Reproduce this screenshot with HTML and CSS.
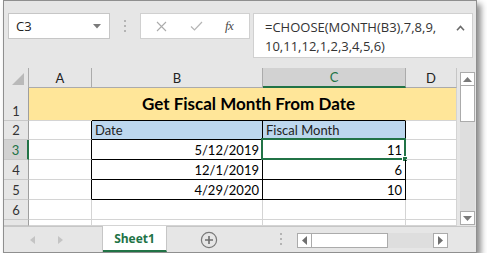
FILE: index.html
```html
<!doctype html>
<html lang="en">
<head>
	<meta charset="UTF-8">
	<title>Get Fiscal Month From Date</title>
	<link rel="stylesheet" href="styles.css">
</head>
<body>
	<div class="window">
		<!-- formula bar -->
		<div class="formula_bar">
			<div class="name_box">
				<span>C3</span>
				<svg width="8" height="5" viewBox="0 0 8 5"><path d="M0 0h8L4 4.5z" fill="#7a7a7a"/></svg>
			</div>
			<div class="grip"><i></i><i></i><i></i></div>
			<div class="fx_box">
				<svg width="11" height="11" viewBox="0 0 11 11"><path d="M1 1l9 9M10 1l-9 9" stroke="#ababab" stroke-width="1.1" fill="none"/></svg>
				<svg width="13" height="10" viewBox="0 0 13 10"><path d="M1 5.5l3.5 3.5L12 1" stroke="#b5b5b5" stroke-width="1.2" fill="none"/></svg>
				<span class="fx">fx</span>
			</div>
			<div class="formula">
				<div class="formula_text">=CHOOSE(MONTH(B3),7,8,9,<br>10,11,12,1,2,3,4,5,6)</div>
				<svg class="collapse" width="9" height="6" viewBox="0 0 9 6"><path d="M1 5.2L4.5 1.5 8 5.2" stroke="#6a6a6a" stroke-width="1.6" fill="none"/></svg>
			</div>
		</div>

		<!-- sheet -->
		<div class="sheet_area">
			<div class="grid">
				<div class="corner"><svg width="12" height="12" viewBox="0 0 12 12"><path d="M12 0v12H0z" fill="#b9b9b9"/></svg></div>
				<div class="col_head">A</div>
				<div class="col_head">B</div>
				<div class="col_head active">C</div>
				<div class="col_head last">D</div>

				<div class="row_head">1</div>
				<div class="cell fill no_right"></div>
				<div class="cell fill title">Get Fiscal Month From Date</div>
				<div class="cell fill"></div>

				<div class="row_head">2</div>
				<div class="cell edge"></div>
				<div class="cell tbl head">Date</div>
				<div class="cell tbl head">Fiscal Month</div>
				<div class="cell"></div>

				<div class="row_head active">3</div>
				<div class="cell edge"></div>
				<div class="cell tbl num">5/12/2019</div>
				<div class="cell tbl num selected">11<span class="sel"></span><span class="handle"></span></div>
				<div class="cell"></div>

				<div class="row_head">4</div>
				<div class="cell edge"></div>
				<div class="cell tbl num">12/1/2019</div>
				<div class="cell tbl num">6</div>
				<div class="cell"></div>

				<div class="row_head">5</div>
				<div class="cell edge"></div>
				<div class="cell tbl num">4/29/2020</div>
				<div class="cell tbl num">10</div>
				<div class="cell"></div>

				<div class="row_head">6</div>
				<div class="cell"></div>
				<div class="cell"></div>
				<div class="cell"></div>
				<div class="cell"></div>

				<div class="row_head"></div>
				<div class="cell"></div>
				<div class="cell"></div>
				<div class="cell"></div>
				<div class="cell"></div>
			</div>
			<div class="vscroll">
				<div class="sbtn"><svg width="9" height="5" viewBox="0 0 9 5"><path d="M0 5L4.5 0 9 5z" fill="#7a7a7a"/></svg></div>
				<div class="thumb"></div>
				<div class="track"></div>
				<div class="sbtn"><svg width="9" height="5" viewBox="0 0 9 5"><path d="M0 0h9L4.5 5z" fill="#7a7a7a"/></svg></div>
			</div>
		</div>

		<!-- sheet tabs -->
		<div class="tab_bar">
			<div class="tab_nav">
				<svg width="5" height="8" viewBox="0 0 5 8"><path d="M5 0v8L0 4z" fill="#c4c4c4"/></svg>
				<svg width="5" height="8" viewBox="0 0 5 8"><path d="M0 0v8l5-4z" fill="#c4c4c4"/></svg>
			</div>
			<div class="tab">Sheet1</div>
			<div class="add_sheet">
				<svg width="18" height="18" viewBox="0 0 18 18"><circle cx="9" cy="9" r="7.6" stroke="#7a7a7a" stroke-width="1.2" fill="none"/><path d="M9 5v8M5 9h8" stroke="#6f6f6f" stroke-width="1.6"/></svg>
			</div>
			<div class="grip tab_grip"><i></i><i></i><i></i></div>
			<div class="hscroll">
				<div class="sbtn"><svg width="5" height="9" viewBox="0 0 5 9"><path d="M5 0v9L0 4.5z" fill="#6f6f6f"/></svg></div>
				<div class="thumb"></div>
				<div class="track"></div>
				<div class="sbtn"><svg width="5" height="9" viewBox="0 0 5 9"><path d="M0 0v9l5-4.5z" fill="#6f6f6f"/></svg></div>
			</div>
		</div>
	</div>
</body>
</html>
```

FILE: styles.css
```css
*,*::before,*::after{box-sizing:border-box;}
html,body{margin:0;padding:0;}
body{
	background:#fff;
	font-family:"Lato","Liberation Sans",sans-serif;
	color:#000;
}
.window{
	margin-left:3px;
	width:474px;
	height:253px;
	border:1px solid #8f8f8f;
	background:#e6e6e6;
	box-shadow:4px 4px 6px rgba(0,0,0,.45);
	display:flex;
	flex-direction:column;
}

/* formula bar */
.formula_bar{
	height:67px;
	padding:12px 0 0 4px;
	display:flex;
	align-items:flex-start;
	flex-shrink:0;
}
.name_box{
	width:102px;
	height:26px;
	background:#fff;
	border:1px solid #c6c6c6;
	display:flex;
	align-items:center;
	justify-content:space-between;
	padding:0 8px 0 7px;
	font-family:"Open Sans",sans-serif;
	font-size:13px;
	color:#222;
}
.grip{
	margin:7px 0 0 14px;
	width:2px;
	display:flex;
	flex-direction:column;
	gap:3px;
}
.grip i{
	display:block;
	width:2px;
	height:2px;
	background:#b4b4b4;
}
.fx_box{
	margin-left:14px;
	width:110px;
	height:26px;
	background:#fff;
	border:1px solid #d0d0d0;
	display:flex;
	align-items:center;
	padding-left:15px;
	gap:0;
}
.fx_box svg:nth-child(2){margin-left:23px;}
.fx{
	margin-left:22px;
	font-family:"Liberation Serif",serif;
	font-style:italic;
	font-size:13px;
	color:#4a4a4a;
	letter-spacing:-0.5px;
}
.formula{
	margin-left:3px;
	width:220px;
	height:45px;
	background:#fff;
	border:1px solid #d0d0d0;
	display:flex;
	justify-content:space-between;
	padding:4px 7px 0 11px;
}
.formula_text{
	font-family:"Open Sans",sans-serif;
	font-size:13px;
	line-height:19px;
	color:#333;
}
.collapse{margin-top:7px;}

/* sheet */
.sheet_area{
	height:158px;
	display:flex;
	flex-shrink:0;
}
.grid{
	display:grid;
	grid-template-columns:25px 63px 171px 143px 51px;
	grid-template-rows:20px 33px 19px 20px 20px 20px 20px 6px;
	background:#fff;
	font-size:13px;
	line-height:16px;
}
.corner{
	background:#e6e6e6;
	border-right:1px solid #ababab;
	display:flex;
	align-items:flex-end;
	justify-content:flex-end;
	padding:0 4px 3px 0;
}
.col_head{
	background:#e6e6e6;
	border-right:1px solid #ababab;
	border-bottom:1px solid #ababab;
	display:flex;
	align-items:center;
	justify-content:center;
	color:#222;
}
.col_head.last{border-right:1px solid #c6c6c6;}
.col_head.active{
	background:#d2d2d2;
	border-bottom:2px solid #217346;
	color:#217346;
}
.row_head{
	background:#e6e6e6;
	border-right:1px solid #9e9e9e;
	border-bottom:1px solid #c8c8c8;
	display:flex;
	align-items:flex-end;
	justify-content:center;
	padding-bottom:1px;
	color:#333;
}
.row_head.active{
	background:#d2d2d2;
	border-right:2px solid #217346;
	color:#217346;
}
.cell{
	border-right:1px solid #d4d4d4;
	border-bottom:1px solid #d4d4d4;
	display:flex;
	align-items:flex-end;
	padding:0 3px 1px;
	white-space:nowrap;
	position:relative;
}
.fill{
	background:#ffe699;
}
.no_right{border-right-color:#ffe699;}
.title{
	grid-column:span 2;
	align-items:center;
	justify-content:center;
	font-weight:bold;
	font-size:17px;
	padding-top:1px;
	border-bottom-color:#000;
	border-right-color:#ffe699;
}
.edge{border-right-color:#000;}
.tbl{
	border-right-color:#000;
	border-bottom-color:#000;
}
.head{
	background:#bdd7ee;
	color:#222;
}
.num{justify-content:flex-end;}
.sel{
	position:absolute;
	top:-2px;left:-2px;right:-1px;bottom:-1px;
	border:2px solid #217346;
}
.handle{
	position:absolute;
	right:-3px;bottom:-3px;
	width:6px;height:6px;
	background:#217346;
	border:1px solid #fff;
}

/* scrollbars */
.vscroll{
	margin:4px 0 0 3px;
	width:15px;
	height:153px;
	display:flex;
	flex-direction:column;
}
.sbtn{
	background:#fff;
	border:1px solid #ababab;
	display:flex;
	align-items:center;
	justify-content:center;
	flex-shrink:0;
}
.vscroll .sbtn{height:14px;}
.vscroll .thumb{
	height:36px;
	background:#fff;
	border:1px solid #ababab;
	border-top:0;
}
.track{
	flex:1;
	background:#dedede;
}

/* tab bar */
.tab_bar{
	flex:1;
	display:flex;
	align-items:stretch;
	border-top:1px solid #c6c6c6;
}
.tab_nav{
	width:99px;
	border-right:1px solid #c6c6c6;
	display:flex;
	align-items:center;
	gap:23px;
	padding-left:26px;
}
.tab{
	width:64px;
	background:#fff;
	border-right:1px solid #c6c6c6;
	border-bottom:2px solid #217346;
	margin-top:-1px;
	display:flex;
	align-items:center;
	justify-content:center;
	font-family:"Open Sans",sans-serif;
	font-weight:bold;
	font-size:12px;
	color:#217346;
	padding-top:1px;
}
.add_sheet{
	margin-left:33px;
	display:flex;
	align-items:center;
	padding-top:1px;
}
.tab_grip{
	margin:6px 0 0 62px;
}
.hscroll{
	margin:6px 0 0 15px;
	width:151px;
	height:15px;
	display:flex;
}
.hscroll .sbtn{width:15px;}
.hscroll .thumb{
	width:76px;
	background:#fff;
	border:1px solid #ababab;
	border-left:0;
}
```
